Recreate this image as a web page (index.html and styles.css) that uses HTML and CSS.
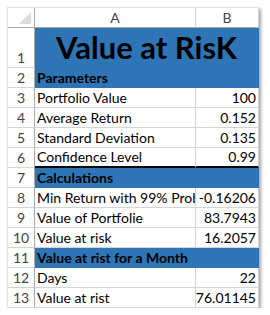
FILE: index.html
```html
<!DOCTYPE html>
<html lang="en">
<head>
<meta charset="utf-8">
<title>Value at Risk</title>
<link rel="stylesheet" href="styles.css">
</head>
<body>
<div class="sheet">
  <div class="corner"><span class="tri"></span></div>
  <div class="colhead">A</div>
  <div class="colhead">B</div>

  <div class="rowhead tall">1</div>
  <div class="cell fill title span2">Value at RisK</div>

  <div class="rowhead">2</div>
  <div class="cell fill bold span2">Parameters</div>

  <div class="rowhead">3</div>
  <div class="cell">Portfolio Value</div>
  <div class="cell num">100</div>

  <div class="rowhead">4</div>
  <div class="cell">Average Return</div>
  <div class="cell num">0.152</div>

  <div class="rowhead">5</div>
  <div class="cell">Standard Deviation</div>
  <div class="cell num">0.135</div>

  <div class="rowhead">6</div>
  <div class="cell ruled">Confidence Level</div>
  <div class="cell num ruled">0.99</div>

  <div class="rowhead">7</div>
  <div class="cell fill bold span2">Calculations</div>

  <div class="rowhead">8</div>
  <div class="cell">Min Return with 99% Prob</div>
  <div class="cell num">-0.16206</div>

  <div class="rowhead">9</div>
  <div class="cell">Value of Portfolie</div>
  <div class="cell num">83.7943</div>

  <div class="rowhead">10</div>
  <div class="cell">Value at risk</div>
  <div class="cell num">16.2057</div>

  <div class="rowhead">11</div>
  <div class="cell fill bold span2">Value at rist for a Month</div>

  <div class="rowhead">12</div>
  <div class="cell">Days</div>
  <div class="cell num">22</div>

  <div class="rowhead">13</div>
  <div class="cell">Value at rist</div>
  <div class="cell num">76.01145</div>
</div>
</body>
</html>
```

FILE: styles.css
```css
* {
  box-sizing: border-box;
}

html, body {
  margin: 0;
  background: #ffffff;
}

body {
  padding: 7px 0 0 7px;
  font-family: Lato, "Liberation Sans", sans-serif;
  font-size: 14px;
  color: #000000;
}

.sheet {
  display: grid;
  grid-template-columns: 27px 161px 63px;
  grid-auto-rows: 20px;
  grid-template-rows: 20px 40px;
  width: max-content;
  border-top: 1px solid #e3e3e3;
  border-left: 1px solid #e3e3e3;
  box-shadow: 2px 2px 3px rgba(0, 0, 0, 0.35);
}

.corner,
.colhead,
.rowhead {
  color: #444444;
  background: #ffffff;
  border-right: 1px solid #d4d4d4;
  border-bottom: 1px solid #d4d4d4;
}

.corner {
  position: relative;
  border-bottom-color: #ababab;
  border-right-color: #ababab;
}

.tri {
  position: absolute;
  right: 3px;
  bottom: 3px;
  width: 0;
  height: 0;
  border-left: 12px solid transparent;
  border-bottom: 12px solid #dcdcdc;
}

.colhead {
  display: flex;
  align-items: center;
  justify-content: center;
  border-bottom-color: #ababab;
  font-size: 14px;
}

.rowhead {
  display: flex;
  align-items: flex-end;
  justify-content: center;
  padding-bottom: 1px;
  border-right-color: #ababab;
  font-size: 14px;
}

.cell {
  display: flex;
  align-items: flex-end;
  padding: 0 2px 1px 2px;
  white-space: nowrap;
  overflow: hidden;
  border-right: 1px solid #d4d4d4;
  border-bottom: 1px solid #d4d4d4;
}

.num {
  justify-content: flex-end;
}

.span2 {
  grid-column: span 2;
}

.fill {
  background: #2e75b6;
  border-right-color: #2e75b6;
  border-bottom-color: #2e75b6;
}

.bold {
  font-weight: 700;
}

.title {
  justify-content: center;
  font-size: 31px;
  line-height: 1;
  font-weight: 700;
  padding-bottom: 4px;
}

.ruled {
  border-bottom: 2px solid #000000;
}
```
